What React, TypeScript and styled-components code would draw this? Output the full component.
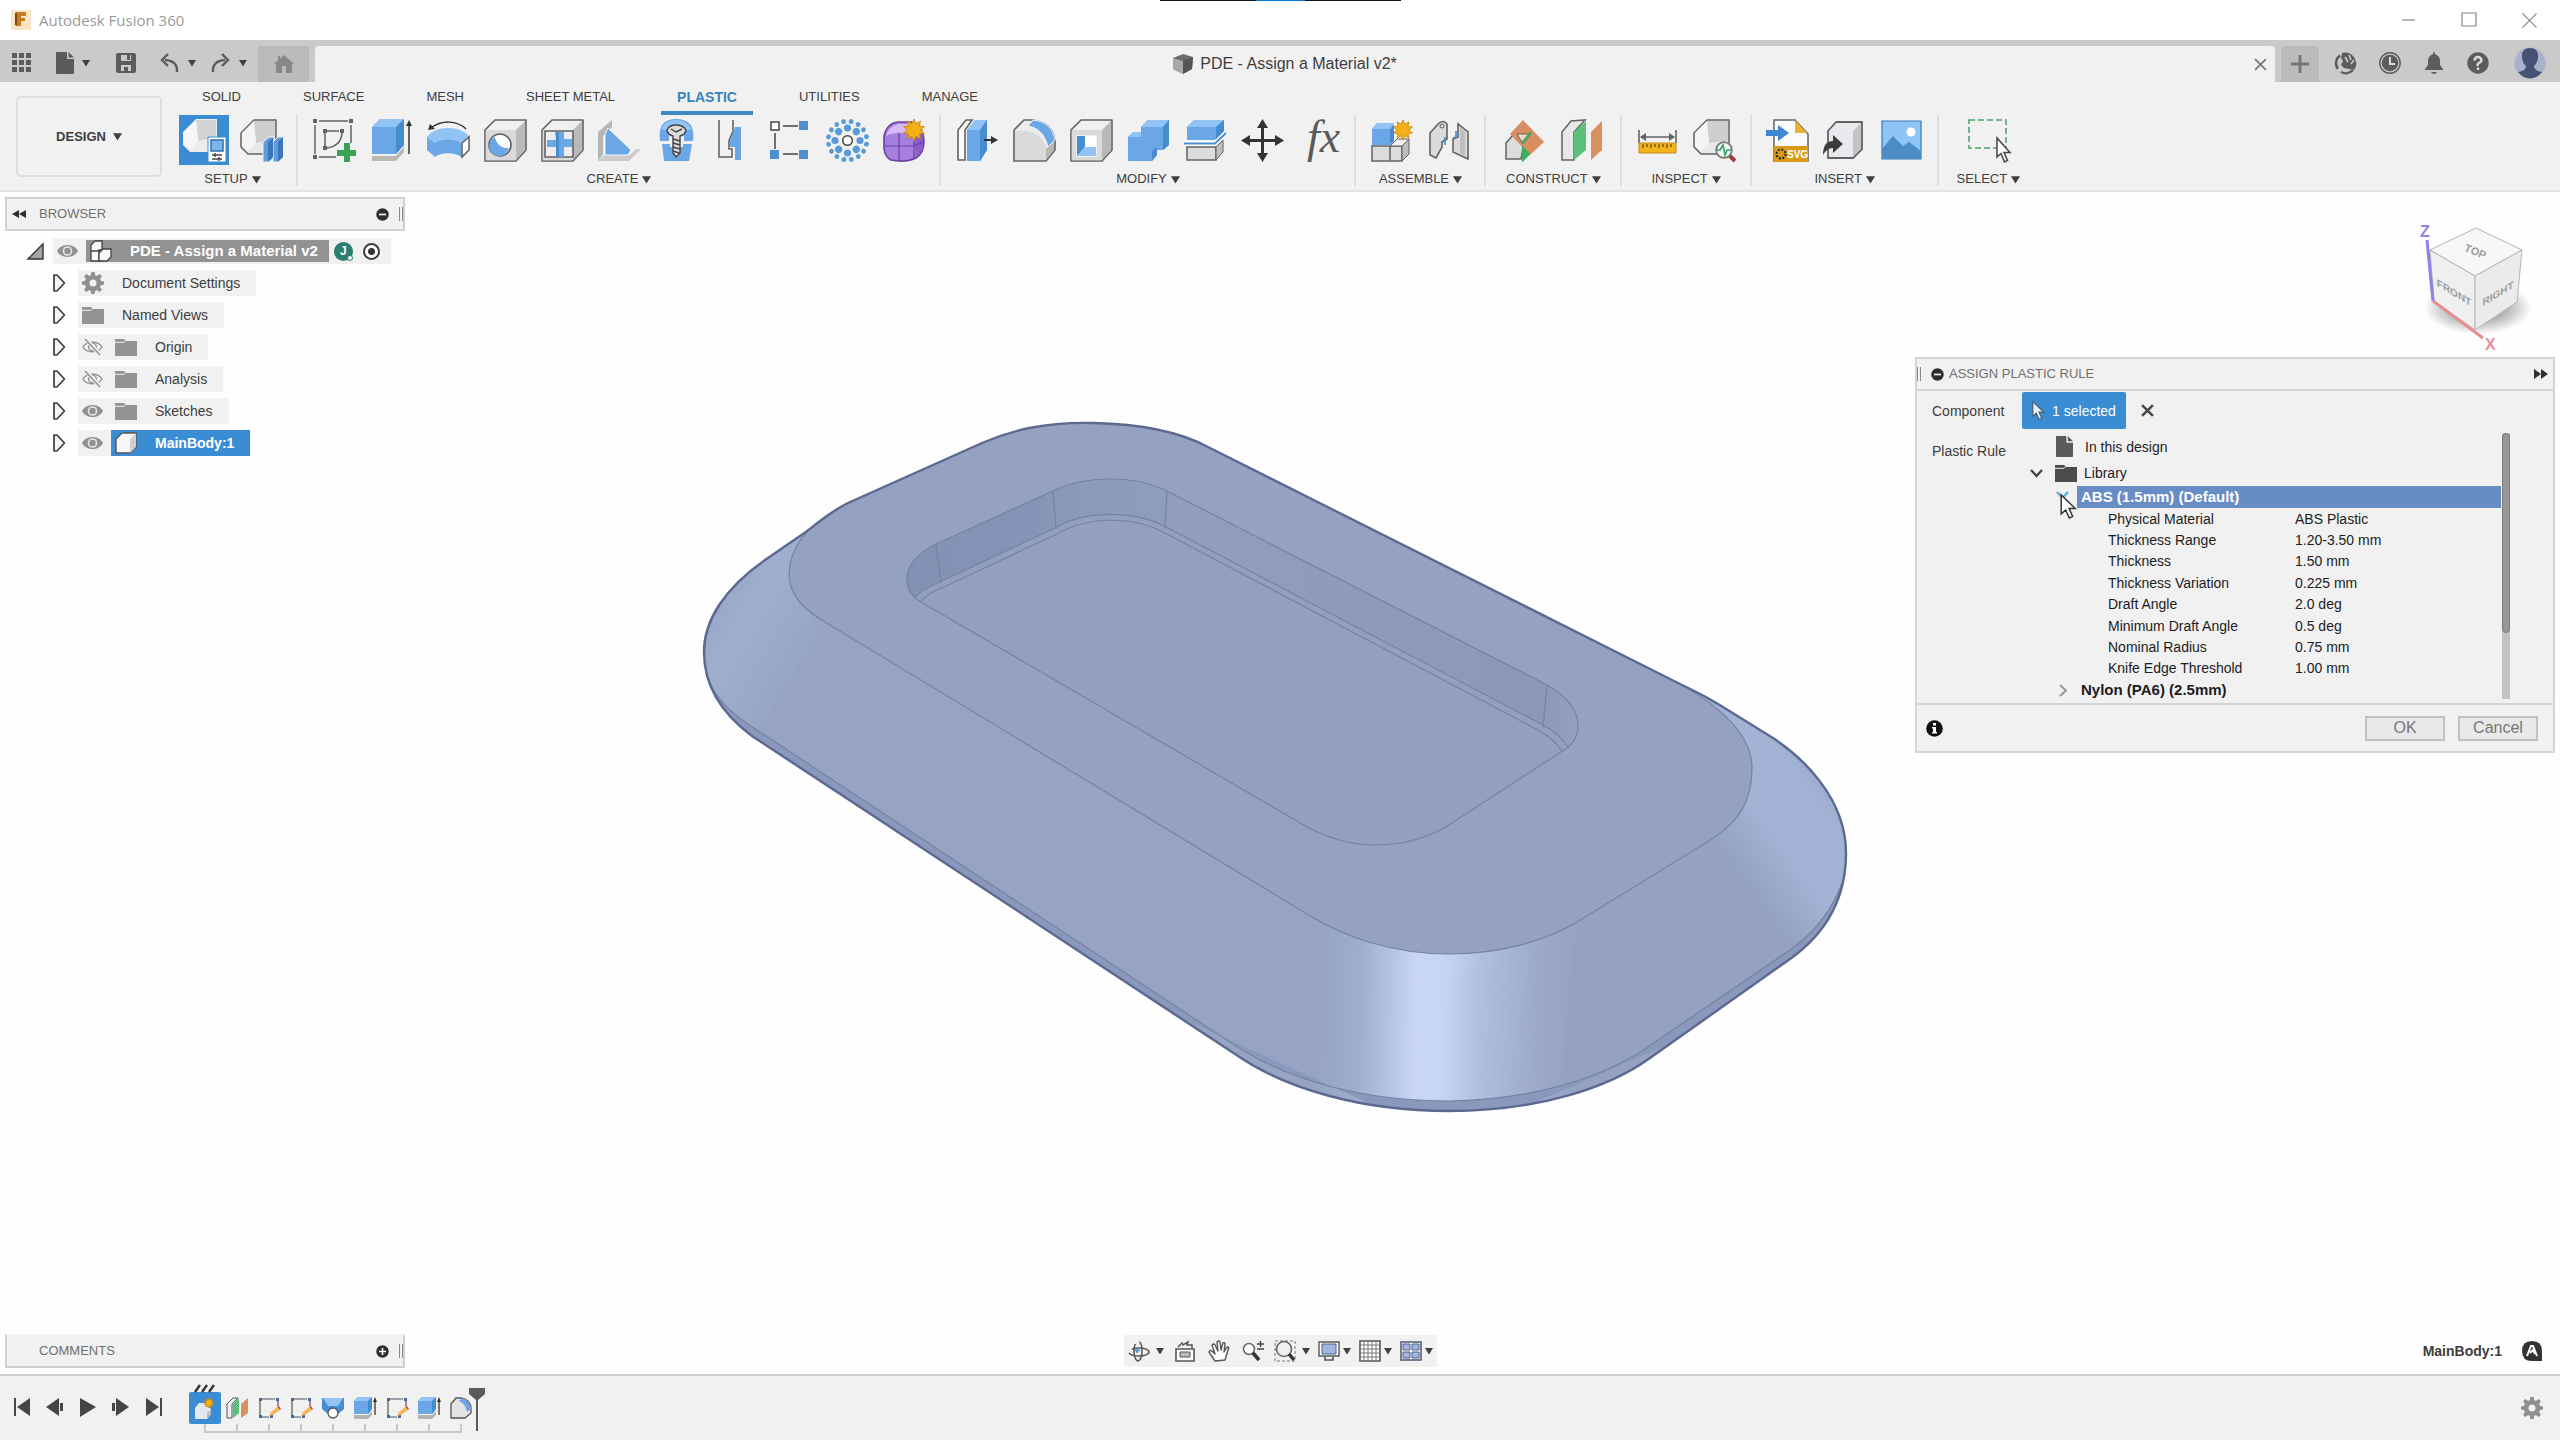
import React from "react";
import styled, { createGlobalStyle, css } from "styled-components";

const color = {
  ink: "#3d3d3d",
  icon: "#5c5c5c",
  muted: "#6f6f6f",
  panel: "#f1f1f1",
  bar: "#cacaca",
  line: "#cfcfcf",
  accent: "#3a8dd3",
  row: "#688dc4",
};

const GlobalStyle = createGlobalStyle`
  *, *::before, *::after { box-sizing: border-box; }
  body { margin: 0; background: #fff; }
  button, input { font: inherit; color: inherit; }
  svg { display: block; flex: none; }
  h1, h2, ul, dl { margin: 0; padding: 0; font: inherit; list-style: none; }
`;

/* ---------- layout ---------- */

const Shell = styled.div`
  min-height: 100vh;
  display: flex;
  flex-direction: column;
  color: ${color.ink};
  font-family: "Liberation Sans", Arial, sans-serif;
  font-size: 14px;
  line-height: 18px;
  background: #fefefe;
`;

const Ghost = styled.button`
  display: inline-flex;
  align-items: center;
  justify-content: center;
  padding: 0;
  border: 0;
  background: none;
  cursor: default;
  white-space: nowrap;
`;

const TitleBar = styled.header`
  display: grid;
  grid-template-columns: 1fr auto 1fr;
  align-items: center;
  height: 40px;
  padding: 0 11px;
  background: #fff;
`;
const AppName = styled.h1`
  display: flex;
  align-items: center;
  gap: 8px;
  font-family: "Open Sans", "Noto Sans", sans-serif;
  font-size: 15px;
  line-height: 20px;
  color: #9a9a9a;
`;
const Strip = styled.div`
  align-self: start;
  width: 241px;
  height: 1px;
  background: linear-gradient(90deg, #111 40%, #0a78d6 40% 60%, #111 60%);
`;
const WindowButtons = styled.div`
  justify-self: end;
  display: flex;
  gap: 43px;
  margin-right: 11px;
  color: #858585;
`;

const TabBar = styled.div`
  display: flex;
  align-items: flex-end;
  height: 42px;
  background: ${color.bar};
`;
const QuickAccess = styled.div`
  display: flex;
  align-items: center;
  height: 38px;
  width: 258px;
  padding-left: 12px;
  color: ${color.icon};
`;
const QuickButton = styled(Ghost)<{ $w: number; $gap: number }>`
  justify-content: space-between;
  width: ${(p) => p.$w}px;
  margin-right: ${(p) => p.$gap}px;
`;
const HomeTab = styled(Ghost)`
  width: 51px;
  height: 36px;
  margin-right: 6px;
  background: #bbb;
  color: #888;
`;
const DocTab = styled.div`
  flex: 1;
  display: flex;
  align-items: center;
  height: 36px;
  padding-right: 8px;
  background: ${color.panel};
  border-radius: 4px 4px 0 0;
`;
const DocTitle = styled.div`
  flex: 1;
  display: flex;
  align-items: center;
  justify-content: center;
  gap: 6px;
  font-size: 16px;
`;
const NewTab = styled(Ghost)`
  width: 38px;
  height: 36px;
  margin-left: 6px;
  border-radius: 4px 4px 0 0;
  background: #bbb;
  color: #777;
`;
const Utilities = styled.div`
  display: flex;
  align-items: center;
  height: 38px;
  gap: 22px;
  padding: 0 14px 0 16px;
  color: ${color.icon};
`;
const Account = styled(Ghost)`
  margin-left: 3px;
`;

const Ribbon = styled.div`
  display: flex;
  height: 110px;
  padding-left: 16px;
  background: ${color.panel};
  border-bottom: 2px solid #e3e3e3;
`;
const WorkspaceButton = styled(Ghost)`
  gap: 7px;
  width: 146px;
  height: 81px;
  margin: 14px 6px 0 0;
  border: 2px solid #dedede;
  border-radius: 5px;
  font-size: 13px;
  font-weight: bold;
`;
const RibbonBody = styled.div`
  flex: 1;
`;
const TabList = styled.div`
  display: flex;
  gap: 30px;
  height: 33px;
  padding-left: 18px;
`;
const Tab = styled(Ghost)<{ $on?: boolean }>`
  padding: 0 16px;
  font-size: 13px;
  border-bottom: 4px solid transparent;
  ${(p) =>
    p.$on &&
    css`
      font-size: 14px;
      font-weight: bold;
      color: #3584bb;
      border-color: #3f88bf;
    `}
`;
const Groups = styled.div`
  display: flex;
`;
const Group = styled.section`
  display: flex;
  flex-direction: column;
  align-items: center;
  padding: 0 10px 0 11px;
  border-right: 2px solid #dedede;
  height: 71px;
  &:last-child {
    border-right: 0;
    padding: 0 9px;
  }
`;
const Tools = styled.div`
  display: flex;
  gap: 7px;
`;
const Tool = styled(Ghost)<{ $on?: boolean }>`
  width: 50px;
  height: 50px;
  background: ${(p) => (p.$on ? color.accent : "none")};
`;
const GroupLabel = styled(Ghost)`
  gap: 4px;
  margin-top: 5px;
  padding: 0 9px;
  font-size: 13px;
  line-height: 18px;
`;

const Stage = styled.main`
  flex: 1;
  display: grid;
  grid-template: 1fr auto / auto 1fr auto;
  padding: 5px 5px 6px;
  background: #fefefe;
`;
const ModelLayer = styled.div`
  grid-area: 1 / 1 / -1 / -1;
  display: flex;
  align-items: center;
  justify-content: center;
`;
const LeftDock = styled.section`
  grid-area: 1 / 1;
  width: 400px;
`;
const RightDock = styled.section`
  grid-area: 1 / 3;
  display: flex;
  flex-direction: column;
  align-items: flex-end;
  width: 640px;
  padding-top: 18px;
`;
const CubeHolder = styled.div`
  padding-right: 5px;
`;
const PanelBar = styled.div`
  display: flex;
  align-items: center;
  height: 34px;
  padding: 0 0 0 5px;
  background: ${color.panel};
  border: 2px solid ${color.line};
  color: ${color.muted};
  font-size: 13px;
`;
const PanelTitle = styled.h2`
  flex: 1;
  padding-left: 13px;
`;
const ArrowSlot = styled.span`
  width: 14px;
`;
const Grip = styled.span`
  width: 4px;
  height: 14px;
  margin-left: 10px;
  border: solid #888;
  border-width: 0 1px;
`;

/* ---------- browser tree ---------- */

const Tree = styled.ul`
  padding-top: 7px;
`;
const TreeRow = styled.li<{ $root?: boolean }>`
  display: flex;
  align-items: center;
  height: 26px;
  margin-bottom: 6px;
  padding-left: ${(p) => (p.$root ? 22 : 48)}px;
`;
const Expander = styled(Ghost)<{ $root?: boolean }>`
  width: ${(p) => (p.$root ? 26 : 25)}px;
  justify-content: flex-start;
`;
const TreeCell = styled.div`
  display: flex;
  align-items: center;
  height: 26px;
  background: ${color.panel};
`;
const EyeButton = styled(Ghost)`
  width: 33px;
  padding-left: 4px;
  justify-content: flex-start;
`;
const TreeLabel = styled.span<{ $kind?: "root" | "sel" }>`
  display: flex;
  align-items: center;
  gap: 18px;
  height: 26px;
  padding: 0 16px 0 4px;
  ${(p) =>
    p.$kind === "sel" &&
    css`
      background: ${color.accent};
      color: #fff;
      font-weight: bold;
    `}
  ${(p) =>
    p.$kind === "root" &&
    css`
      height: 22px;
      padding-right: 11px;
      background: #929292;
      color: #fff;
      font-size: 15px;
      font-weight: bold;
    `}
`;
const Badge = styled.span`
  position: relative;
  display: grid;
  place-items: center;
  width: 19px;
  height: 19px;
  margin: 0 10px 0 5px;
  border-radius: 50%;
  background: #2d7d70;
  color: #fff;
  font-size: 12px;
  font-weight: bold;
  &::after {
    content: "";
    position: absolute;
    right: 0;
    bottom: 0;
    width: 6px;
    height: 6px;
    border: 1px solid #2d7d70;
    border-radius: 50%;
    background: #fff;
  }
`;
const ActiveRadio = styled.input`
  appearance: none;
  width: 17px;
  height: 17px;
  margin: 0 11px 0 0;
  border: 2px solid #3d3d3d;
  border-radius: 50%;
  background: radial-gradient(circle, #333 0 3px, #fff 4px);
`;

/* ---------- dialog ---------- */

const Dialog = styled.form`
  width: 640px;
  background: ${color.panel};
  border: 2px solid #d4d4d4;
`;
const DialogHead = styled.div`
  display: flex;
  align-items: center;
  height: 32px;
  padding: 0 5px 0 0;
  border-bottom: 2px solid #d4d4d4;
  color: ${color.muted};
  font-size: 13px;
  h2 {
    flex: 1;
    padding-left: 5px;
  }
`;
const HeadGrip = styled(Grip)`
  margin: 0 10px 0 0;
`;
const Fields = styled.div`
  display: grid;
  grid-template-columns: 90px 1fr;
  padding: 1px 43px 2px 15px;
`;
const FieldLabel = styled.span<{ $top?: number }>`
  padding-top: ${(p) => p.$top}px;
`;
const Picker = styled.div`
  display: flex;
  align-items: center;
  gap: 15px;
  height: 37px;
`;
const Selected = styled(Ghost)`
  gap: 7px;
  width: 104px;
  height: 37px;
  border-radius: 2px;
  background: ${color.accent};
  color: #fff;
`;
const RuleBox = styled.div`
  display: flex;
  height: 272px;
  padding-top: 4px;
`;
const RuleList = styled.div`
  flex: 1;
  color: #1c1c1c;
`;
const RuleRow = styled.div<{ $indent: number; $h: number }>`
  display: flex;
  align-items: center;
  height: ${(p) => p.$h}px;
  padding-left: ${(p) => p.$indent}px;
`;
const Twist = styled(Ghost)<{ $w: number }>`
  position: relative;
  justify-content: flex-start;
  width: ${(p) => p.$w}px;
`;
const Pointer = styled.span`
  position: absolute;
  left: 4px;
  top: 7px;
`;
const IconCell = styled.span`
  width: 29px;
`;
const RuleName = styled.span<{ $on?: boolean }>`
  flex: 1;
  height: 100%;
  display: flex;
  align-items: center;
  padding-left: 4px;
  margin-right: 1px;
  font-size: 15px;
  font-weight: bold;
  ${(p) =>
    p.$on &&
    css`
      background: ${color.row};
      color: #fff;
    `}
`;
const RuleTable = styled.table`
  width: 394px;
  height: 171px;
  margin-left: 86px;
  border-collapse: collapse;
  th,
  td {
    padding: 0;
    line-height: 16px;
    font-weight: normal;
    text-align: left;
  }
  th {
    width: 187px;
  }
`;
const Track = styled.div`
  width: 8px;
  height: 266px;
  background: #c2c2c2;
`;
const Thumb = styled.div`
  height: 200px;
  border: 1px solid #7c7c7c;
  border-radius: 4px;
  background: #979797;
`;
const DialogFoot = styled.div`
  display: flex;
  align-items: center;
  gap: 13px;
  height: 48px;
  padding: 0 15px 0 9px;
  border-top: 2px solid #d4d4d4;
`;
const Spring = styled.span`
  flex: 1;
`;
const FootButton = styled.button`
  width: 80px;
  height: 25px;
  padding: 0;
  border: 2px solid #c2c2c2;
  background: #e9e9e9;
  color: #777;
  font-size: 16px;
  line-height: 20px;
`;

/* ---------- bottom ---------- */

const StageFoot = styled.div`
  grid-area: 2 / 1 / 3 / -1;
  display: grid;
  grid-template-columns: 1fr auto 1fr;
  align-items: center;
`;
const Comments = styled(PanelBar)`
  width: 400px;
  border-top-color: ${color.panel};
`;
const NavBar = styled.div`
  display: flex;
  align-items: center;
  gap: 8px;
  height: 32px;
  padding: 0 4px;
  background: ${color.panel};
`;
const NavButton = styled(Ghost)<{ $gap?: number }>`
  gap: ${(p) => p.$gap ?? 0}px;
  padding: 0 ${(p) => (p.$gap ? 0 : 2)}px;
`;
const Status = styled.div`
  justify-self: end;
  display: flex;
  align-items: center;
  gap: 20px;
  padding-right: 13px;
  font-weight: bold;
`;
const Timeline = styled.footer`
  display: flex;
  align-items: center;
  height: 66px;
  padding: 0 17px 0 13px;
  background: ${color.panel};
  border-top: 2px solid #cdcdcd;
`;
const Playback = styled.div`
  display: flex;
  gap: 15px;
  color: #454545;
`;
const History = styled.ol`
  display: flex;
  margin: 0 0 0 26px;
  padding: 9px 0 0;
  list-style: none;
`;
const Step = styled.li`
  width: 32px;
  display: flex;
  flex-direction: column;
  align-items: center;
  &::after {
    content: "";
    width: 32px;
    height: 9px;
    border-bottom: 2px solid #c8c8c8;
    background: linear-gradient(#c8c8c8, #c8c8c8) 50% 0 / 2px 9px no-repeat;
  }
  &:first-child::after {
    align-self: flex-end;
    width: 17px;
    background-position: 0 0;
  }
  &:last-child::after {
    align-self: flex-start;
    width: 17px;
    background-position: 100% 0;
  }
`;
const StepButton = styled(Ghost)<{ $on?: boolean }>`
  position: relative;
  width: 32px;
  height: 32px;
  border-radius: 2px;
  background: ${(p) => (p.$on ? color.accent : "none")};
`;
const Hatch = styled.span`
  position: absolute;
  left: 5px;
  top: -7px;
`;
const Marker = styled.span`
  margin-left: -8px;
  padding-top: 3px;
`;

/* ---------- small icons ---------- */

const Caret = ({ s = 8 }: { s?: number }) => (
  <svg width={s} height={s} viewBox="0 0 8 8" aria-hidden="true">
    <path d="M0 1H8L4 7.5Z" fill="#3f3f3f" />
  </svg>
);

const Svg = ({ w = 20, h = 20, vb, children }: { w?: number; h?: number; vb?: string; children: React.ReactNode }) => (
  <svg width={w} height={h} viewBox={vb ?? `0 0 ${w} ${h}`} fill="none" aria-hidden="true" overflow="visible">
    {children}
  </svg>
);

const Gear = ({ s = 22 }: { s?: number }) => (
  <Svg w={s} h={s} vb="0 0 22 22">
    <circle cx="11" cy="11" r="5.8" stroke="#8f8f8f" strokeWidth="4.6" />
    {[0, 45, 90, 135, 180, 225, 270, 315].map((a) => (
      <path key={a} d="M8.600 4.600 9.400 0H12.600L13.400 4.600Z" fill="#8f8f8f" transform={`rotate(${a} 11 11)`} />
    ))}
  </Svg>
);

const Eye = ({ off }: { off?: boolean }) =>
  off ? (
    <Svg w={21} h={18}>
      <path d="M1 9C5 2.500 16 2.500 20 9C16 15.500 5 15.500 1 9Z" stroke="#8c8c8c" strokeWidth="1.300" />
      <circle cx="10.500" cy="9" r="3.800" stroke="#8c8c8c" strokeWidth="1.300" />
      <path d="M4 1 18 17" stroke="#f1f1f1" strokeWidth="4" />
      <path d="M3 1 18 17" stroke="#8c8c8c" strokeWidth="1.300" />
    </Svg>
  ) : (
    <Svg w={21} h={18}>
      <path d="M0 9C4 1 17 1 21 9C17 17 4 17 0 9Z" fill="#929292" />
      <circle cx="10.500" cy="9" r="4" stroke="#e6e6e6" strokeWidth="1.600" />
    </Svg>
  );

const Folder = ({ c = "#929292", w = 22 }: { c?: string; w?: number }) => (
  <Svg w={w} h={18} vb="0 0 22 18">
    <path d="M0 1H9L11 3H22V18H0Z" fill={c} />
    <path d="M0 4.300H9L11 2.300" stroke="#f1f1f1" strokeWidth="1" />
  </Svg>
);

const FileIcon = ({ w = 18, h = 22 }: { w?: number; h?: number }) => (
  <Svg w={w} h={h} vb="0 0 18 22">
    <path d="M0 1Q0 0 1 0H11V7H18V21Q18 22 17 22H1Q0 22 0 21Z" fill="#5a5a5a" />
    <path d="M12.500 0 18 5.500H12.500Z" fill="#5a5a5a" />
  </Svg>
);

const Dot = ({ plus }: { plus?: boolean }) => (
  <Svg w={13} h={13}>
    <circle cx="6.500" cy="6.500" r="6.200" fill="#2e2e2e" />
    <path d={plus ? "M3 6.500H10M6.500 3V10" : "M3 6.500H10"} stroke="#fff" strokeWidth="1.600" />
  </Svg>
);

const Doubles = ({ left }: { left?: boolean }) => (
  <Svg w={14} h={10}>
    <path d={left ? "M7 1V9L0 5ZM14 1V9L7 5Z" : "M0 0V10L7 5ZM7 0V10L14 5Z"} fill="#2e2e2e" />
  </Svg>
);

const Cross = ({ s = 12, w = 2, c = "currentColor" }: { s?: number; w?: number; c?: string }) => (
  <Svg w={s} h={s} vb="0 0 12 12">
    <path d="M1 1 11 11M11 1 1 11" stroke={c} strokeWidth={w} />
  </Svg>
);

const Arrow = ({ w = 16, h = 24, fill = "#fff", stroke = "#333" }) => (
  <Svg w={w} h={h} vb="0 0 16 24">
    <path d="M1 1V19L5.300 15.200 8.800 23 12 21.500 8.600 14H14.500Z" fill={fill} stroke={stroke} strokeWidth="1.400" />
  </Svg>
);

const TreeArrow = () => (
  <Svg w={13} h={18}>
    <path d="M1 1H4L11.500 9 4 17H1Z" fill="#f4f4f4" stroke="#3c3c3c" strokeWidth="1.700" strokeLinejoin="round" />
  </Svg>
);

/* ---------- ribbon icons, 43 x 43 ---------- */

const K = "#636363";
const B = { top: "#91c3f5", front: "#6ba7e6", side: "#478bd0" };

const RI = ({ children }: { children: React.ReactNode }) => (
  <Svg w={43} h={43}>{children}</Svg>
);

const GreyBox = () => (
  <>
    <path d="M1 11 11 1H42V31L32 42H1Z" fill="#f0f0f0" stroke={K} strokeWidth="1.600" strokeLinejoin="round" />
    <path d="M1.800 11H32V41.200H1.800Z" fill="#dadada" />
    <path d="M32 11 41 2V31L32 41Z" fill="#b9b9b9" />
  </>
);

const Part = () => (
  <>
    <path d="M1 14 14 1H36V30L28 35H8L1 28Z" fill="#e4e4e4" stroke={K} strokeWidth="1.500" strokeLinejoin="round" />
    <path d="M14 2H35V22L16 24Z" fill="#cfcfcf" />
    <path d="M2 14 14 2 16 24 8 33 2 27Z" fill="#f4f4f4" />
    <path d="M16 24 35 22V30L28 34H9Z" fill="#e9e9e9" />
  </>
);

const Burst = ({ x, y, r = 10 }: { x: number; y: number; r?: number }) => {
  const pts = Array.from({ length: 20 }, (_, i) => {
    const q = i % 2 ? r * 0.6 : r;
    const a = (i * Math.PI) / 10;
    return `${(x + q * Math.sin(a)).toFixed(1)},${(y - q * Math.cos(a)).toFixed(1)}`;
  }).join(" ");
  return <polygon points={pts} fill="#f3b117" stroke="#c98500" strokeWidth="0.800" />;
};

const icons: Record<string, React.ReactNode> = {
  assignRule: (
    <RI>
      <path d="M0 13 13 0H34V24L26 33H7L0 26Z" fill="#ececec" />
      <path d="M13 1H33V18L15 22Z" fill="#d4d4d4" />
      <path d="M1 13 13 1 15 22 7 31 1 25Z" fill="#f7f7f7" />
      <path d="M25 18H43V43H25Z" fill="#fff" stroke={color.accent} strokeWidth="1" />
      <path d="M28 21H40V32H28Z" fill="#7db4ea" stroke="#2f6fae" strokeWidth="1.500" />
      <path d="M29 36H39M29 40H39M32 34V38M36 38V42" stroke="#444" strokeWidth="1.400" />
    </RI>
  ),
  manageRules: (
    <RI>
      <Part />
      <path d="M23 23 29 18H34L33 40 28 43H23Z" fill="#5c9ce0" stroke="#f1f1f1" strokeWidth="1" />
      <path d="M33 23 38 18H43V38L38 43H33Z" fill="#5c9ce0" stroke="#f1f1f1" strokeWidth="1" />
      <path d="M38 23 43 18V38L38 43Z" fill="#3a76b8" />
      <path d="M28 23 33 19V38L28 43Z" fill="#3a76b8" />
    </RI>
  ),
  sketch: (
    <RI>
      <path d="M6 2H35M2 6V35M6 38H23M38 6V24M14 12H26M12 14V27" stroke={K} strokeWidth="1.500" />
      <path d="M29 14Q28 27 14 29" stroke={K} strokeWidth="1.600" />
      <path d="M0 0H4V4H0ZM36 0H40V4H36ZM0 36H4V40H0ZM10 10H14V14H10ZM27 10H31V14H27ZM10 27H14V31H10Z" fill={K} />
      <path d="M31 24H37V31H43V37H37V43H31V37H24V31H31Z" fill="#3ba159" />
    </RI>
  ),
  extrude: (
    <RI>
      <path d="M2 37H26L34 28V33L26 42H2Z" fill="#b9b9b2" />
      <path d="M2 8 10 0H34V26L26 35H2Z" fill={B.front} />
      <path d="M2 8 10 0H34L26 8Z" fill={B.top} />
      <path d="M26 8 34 0V26L26 35Z" fill={B.side} />
      <path d="M39 35V4" stroke="#333" strokeWidth="1.500" />
      <path d="M36 7 39 1 42 7Z" fill="#333" />
    </RI>
  ),
  revolve: (
    <RI>
      <path d="M0 18C8 6 34 6 43 18L35 24C30 19 13 19 8 24Z" fill={B.top} />
      <path d="M0 18 8 24V38L0 31ZM8 24C13 19 30 19 34 24V38C28 33 14 33 8 38Z" fill={B.front} />
      <path d="M35 24 42 18V31L35 38Z" fill="#fff" stroke={K} strokeWidth="1.600" />
      <path d="M4 9C14 1 30 1 39 10" stroke="#333" strokeWidth="1.500" />
      <path d="M1 11 3 5 8 10Z" fill="#333" />
    </RI>
  ),
  hole: (
    <RI>
      <GreyBox />
      <circle cx="16" cy="26" r="11" fill="#fff" stroke={K} strokeWidth="1.600" />
      <path d="M11 18A10 10 0 1 0 25 29C18 30 12 25 11 18Z" fill={B.front} />
    </RI>
  ),
  rest: (
    <RI>
      <GreyBox />
      <path d="M4 12H32V38H4Z" fill="#eee" stroke={K} strokeWidth="1.600" />
      <path d="M14 13H23V20H31V28H23V38H15V28H6V21H15Z" fill={B.front} />
      <path d="M15 13H18V38H15Z" fill={B.side} />
    </RI>
  ),
  web: (
    <RI>
      <path d="M0 13 14 1V8L5 17V35L0 42Z" fill="#b5b5b5" />
      <path d="M0 42 6 36H32L38 30H43L31 42Z" fill="#cbcbcb" />
      <path d="M7 15 10 9 33 31 30 36H7Z" fill={B.front} stroke="#f8f8f8" strokeWidth="1" />
    </RI>
  ),
  boss: (
    <RI>
      <path d="M5 22Q2 0 21 0Q41 0 38 22H29V15H14V22Z" fill={B.front} />
      <path d="M6 10Q10 1 21 1T37 10L30 12Q21 6 13 12Z" fill={B.top} />
      <path d="M7 25H15V28H28V25H37L34 42H9Z" fill={B.front} />
      <path d="M12 11Q14 6 21 6T31 11Q30 16 25 17V34L21 38 18 34V17Q13 16 12 11Z" fill="#dcdcdc" stroke="#444" strokeWidth="1.400" />
      <path d="M16 10 21 13 27 10M18 20 25 22M18 24 25 26M18 28 25 30M18 32 24 34" stroke="#444" strokeWidth="1.400" />
    </RI>
  ),
  snap: (
    <RI>
      <path d="M7 1V38H20V30H17V22L21 12V1" stroke={K} strokeWidth="1.600" />
      <path d="M23 8H29V41H23V28H18V22Z" fill={B.front} />
    </RI>
  ),
  pattern: (
    <RI>
      <path d="M14 7H29M6 14V30M14 35H29" stroke="#444" strokeWidth="1.500" />
      <path d="M2 3H10V11H2Z" fill="#fff" stroke="#444" strokeWidth="1.500" />
      <path d="M30 2H39V11H30ZM1 31H10V40H1ZM30 31H39V40H30Z" fill="#4e8fd2" />
    </RI>
  ),
  circular: (
    <RI>
      {Array.from({ length: 8 }, (_, i) => (
        <circle key={i} cx={21.5} cy={9} r={3.6} fill="#5a9ad6" transform={`rotate(${i * 45} 21.5 21.5)`} />
      ))}
      {Array.from({ length: 16 }, (_, i) => (
        <circle key={i} cx={21.5} cy={2.2} r={2.4} fill="#5a9ad6" transform={`rotate(${i * 22.5 + 11} 21.5 21.5)`} />
      ))}
      <circle cx="21.500" cy="21.500" r="4.800" fill="#fff" stroke="#444" strokeWidth="1.500" />
    </RI>
  ),
  form: (
    <RI>
      <path d="M1 17Q4 4 15 3H28Q40 6 41 22Q41 34 33 39Q22 44 8 41Q2 38 1 30Z" fill="#a77fdf" stroke="#6a41a5" strokeWidth="1.600" />
      <path d="M3 17Q6 7 15 5H28L25 14Q10 13 3 17Z" fill="#d5baf5" />
      <path d="M31 18 40 14V30L33 38Z" fill="#8a5cc8" />
      <path d="M2 27H31L40 23M16 14V41M31 16V40" stroke="#6a41a5" strokeWidth="1.200" />
      <Burst x={31} y={11} r={11} />
    </RI>
  ),
  press: (
    <RI>
      <path d="M2 11 10 1H16L9 11V41H2Z" fill="#fafafa" stroke={K} strokeWidth="1.600" />
      <path d="M11 11 19 1H31V31L24 42H11Z" fill={B.front} />
      <path d="M11 11 19 1H31L24 11Z" fill={B.top} />
      <path d="M24 11 31 1V31L24 42Z" fill={B.side} />
      <path d="M28 21H36" stroke="#333" strokeWidth="2" />
      <path d="M35 17 42 21 35 25Z" fill="#333" />
    </RI>
  ),
  fillet: (
    <RI>
      <path d="M1 11 11 1H19C32 2 41 10 42 22V31L33 42H1Z" fill="#ececec" stroke={K} strokeWidth="1.600" />
      <path d="M2 12H10C24 12 31 20 33 28V41H2Z" fill="#dadada" />
      <path d="M15 7 20 1C34 2 41 12 42 21L35 28C32 16 26 9 15 7Z" fill={B.front} stroke="#f4f4f4" strokeWidth="1" />
      <path d="M33 30 41 23V31L33 41Z" fill="#b5b5b5" />
    </RI>
  ),
  shell: (
    <RI>
      <GreyBox />
      <path d="M6 16H27V38H6Z" fill="#fff" stroke="#ddd" />
      <path d="M7 17H15V28L7 37Z" fill={B.side} />
      <path d="M15 28H26V37H7Z" fill={B.top} />
    </RI>
  ),
  combine: (
    <RI>
      <path d="M1 18 6 13H14V8L21 1H42V26L36 31H30V36L25 42H1Z" fill={B.front} />
      <path d="M14 8 21 1H42L36 8ZM1 18 6 13H14V18Z" fill={B.top} />
      <path d="M36 8 42 1V26L36 31ZM25 32 30 28V36L25 42Z" fill={B.side} />
    </RI>
  ),
  split: (
    <RI>
      <path d="M3 8 10 1H40V12L32 21H3Z" fill={B.front} />
      <path d="M3 8 10 1H40L32 8Z" fill={B.top} />
      <path d="M32 8 40 1V12L32 21Z" fill={B.side} />
      <path d="M3 28H32V41H3Z" fill="#dcdcdc" stroke={K} strokeWidth="1.500" />
      <path d="M32 28 39 21V33L32 41Z" fill="#c0c0c0" stroke={K} />
      <path d="M0 24.500H31L42 14" stroke="#fff" strokeWidth="5" />
      <path d="M0 24.500H31L42 14" stroke="#4a8ed4" strokeWidth="2" />
    </RI>
  ),
  move: (
    <RI>
      <path d="M21.500 6V37M6 21.500H37" stroke="#333" strokeWidth="3" />
      <path d="M21.500 0 27 9H16ZM21.500 43 27 34H16ZM0 21.500 9 16V27ZM43 21.500 34 16V27Z" fill="#333" />
    </RI>
  ),
  component: (
    <RI>
      <path d="M1 27H19V42H1ZM19 27H31V42H19Z" fill="#dcdcdc" stroke={K} strokeWidth="1.500" />
      <path d="M19 27 26 20H38L31 27Z" fill="#f0f0f0" stroke={K} />
      <path d="M31 27 38 20V35L31 42Z" fill="#bcbcbc" stroke={K} />
      <path d="M1 10 6 4H23L19 10V26H1Z" fill={B.front} />
      <path d="M1 10 6 4H23L19 10Z" fill={B.top} />
      <path d="M19 10 23 5V22L19 26Z" fill={B.side} />
      <Burst x={32} y={11} />
    </RI>
  ),
  joint: (
    <RI>
      <path d="M2 14 10 5Q15 0 19 5V20L14 23V28L8 39 2 36Z" fill="#dadada" stroke={K} strokeWidth="1.600" />
      <circle cx="14" cy="7" r="2" stroke={K} />
      <path d="M25 20 30 18V5L40 13V40L25 33Z" fill="#dadada" stroke={K} strokeWidth="1.600" />
      <path d="M32 8 37 13V37L32 34Z" fill="#bdbdbd" />
      <path d="M17 18V26M28 12V18L25 19" stroke="#3a8bd8" strokeWidth="1.600" />
    </RI>
  ),
  midplane: (
    <RI>
      <path d="M3 24 11 15H24L21 24 18 40H3Z" fill="#dcdcdc" stroke={K} strokeWidth="1.500" />
      <path d="M20 1 41 23 27 36 7 15Z" fill="#d98e61" />
      <path d="M14 15H28L20 25Z" fill="#ecd9c8" stroke={K} />
      <path d="M28 13 19 24M20 41V29L26 35Z" stroke="#38b05f" strokeWidth="2" fill="#38b05f" />
    </RI>
  ),
  offsetPlane: (
    <RI>
      <path d="M2 13 11 2 25 1 14 13V41H2Z" fill="#e8e8e8" stroke={K} strokeWidth="1.500" />
      <path d="M14 13 26 2V31L14 41Z" fill="#5ac07a" />
      <path d="M31 13 42 2V31L31 41Z" fill="#d9905f" />
    </RI>
  ),
  measure: (
    <RI>
      <path d="M3 11V24M40 11V24M5 18H38" stroke={K} strokeWidth="1.600" />
      <path d="M4 18 10 14V22ZM39 18 33 14V22Z" fill={K} />
      <path d="M3 24H40V34H3Z" fill="#f2b51c" stroke="#c48b10" />
      <path d="M7 25V29M11 25V28M15 25V29M19 25V28M23 25V29M27 25V28M31 25V29M35 25V28" stroke="#6b4c00" strokeWidth="1.300" />
    </RI>
  ),
  analyse: (
    <RI>
      <Part />
      <path d="M35 35 42 42" stroke="#a33e36" strokeWidth="4" />
      <circle cx="31" cy="31" r="7.800" fill="#eef8f1" stroke="#777" strokeWidth="1.800" />
      <path d="M24 31H27L30 26 32 36 34 31H38" stroke="#38a169" strokeWidth="1.700" />
    </RI>
  ),
  insertSvg: (
    <RI>
      <path d="M8 1H29L42 15V42H8Z" fill="#fbfbfb" stroke={K} strokeWidth="1.500" />
      <path d="M29 1 41 14H29Z" fill="#e6b432" />
      <path d="M8 27H42V43H8Z" fill="#d99b17" />
      <circle cx="15" cy="35" r="4.500" stroke="#222" strokeWidth="2" strokeDasharray="2 1.500" />
      <text x="21" y="39" fontFamily="Liberation Sans, sans-serif" fontSize="10" fontWeight="bold" fill="#fff">SVG</text>
      <path d="M0 11H12V6L23 14 12 22V17H0Z" fill="#3e86cf" />
    </RI>
  ),
  derive: (
    <RI>
      <path d="M5 12 13 3H39V30L30 39H5Z" fill="#e9e9ee" stroke={K} strokeWidth="1.800" strokeLinejoin="round" />
      <path d="M30 12 38 4V30L30 38Z" fill="#c4c4c8" />
      <path d="M6 12H30V38H6Z" fill="#e8e8ee" />
      <path d="M0 36Q0 22 10 22V16L20 25 10 34V29Q4 29 0 36Z" fill="#3c3c3c" />
    </RI>
  ),
  canvas: (
    <RI>
      <path d="M2 2H41V40H2Z" fill="#8fc4f7" stroke="#3b78b8" strokeWidth="1.200" />
      <circle cx="31" cy="13" r="4.500" fill="#fff" />
      <path d="M2 30 13 17 23 27 29 23 41 32V40H2Z" fill="#4c8cc7" />
    </RI>
  ),
  select: (
    <RI>
      <path d="M2 1H39V29H2Z" stroke="#4ea36f" strokeWidth="1.600" strokeDasharray="6 3" />
      <path d="M30 19V38L34 34.500 37.500 43 40.500 41.500 37 33.500H43Z" fill="#fff" stroke="#444" strokeWidth="1.500" />
    </RI>
  ),
  fx: (
    <RI>
      <text x="9" y="33" fontFamily="Liberation Serif, serif" fontSize="46" fontStyle="italic" fill="#5a5a5a">fx</text>
    </RI>
  ),
};

const groups = [
  { name: "SETUP", tools: ["assignRule", "manageRules"] },
  { name: "CREATE", tools: ["sketch", "extrude", "revolve", "hole", "rest", "web", "boss", "snap", "pattern", "circular", "form"] },
  { name: "MODIFY", tools: ["press", "fillet", "shell", "combine", "split", "move", "fx"] },
  { name: "ASSEMBLE", tools: ["component", "joint"] },
  { name: "CONSTRUCT", tools: ["midplane", "offsetPlane"] },
  { name: "INSPECT", tools: ["measure", "analyse"] },
  { name: "INSERT", tools: ["insertSvg", "derive", "canvas"] },
  { name: "SELECT", tools: ["select"] },
];

/* ---------- drawings ---------- */

const Model = () => {
  const outline =
    "M1093 423C1045 422 1012 430 982 443L848 503C828 513 815 526 800 536L765 560C725 588 704 620 704 652C704 690 725 716 752 736L1238 1056C1285 1088 1360 1111 1449 1111C1540 1111 1610 1087 1650 1058L1790 959C1828 932 1846 895 1846 853C1846 800 1805 757 1765 733L1718 704C1700 693 1690 689 1680 684L1208 447C1180 432 1145 424 1093 423Z";
  const lower = "M706 672C712 697 732 714 757 730L1239 1048C1290 1080 1362 1101 1449 1101C1535 1100 1605 1076 1645 1049L1790 950C1818 930 1834 905 1842 883";
  const topEdge = "M848 503C802 526 789 551 789 575C790 597 805 610 825 622L1307 914C1345 938 1395 954 1449 954C1500 954 1545 941 1577 922L1712 839C1740 821 1752 800 1752 768C1752 735 1720 706 1680 684";
  const pocket =
    "M907 579C907 565 918 553 936 544L1053 491C1085 475 1135 475 1167 491L1547 685C1568 697 1578 710 1578 726C1578 735 1575 742 1567 748L1449 825C1425 840 1400 845 1375 845C1350 845 1328 838 1307 827L921 602C912 596 907 590 907 579Z";
  const floor =
    "M914 598C922 590 930 586 942 581L1055 528C1085 510 1135 510 1166 527L1543 725C1555 732 1563 738 1568 748L1449 825C1425 840 1400 845 1375 845C1350 845 1328 838 1307 827L921 602Z";
  return (
    <svg width="1200" height="766" viewBox="680 400 1200 766" role="img" aria-label="Plastic part model">
      <defs>
        <linearGradient id="corner" gradientUnits="userSpaceOnUse" x1="1318" x2="1580" y1="1000" y2="1006">
          <stop offset="0" stopColor="#96a3c4" />
          <stop offset="0.160" stopColor="#9fadcf" />
          <stop offset="0.300" stopColor="#b9c7e8" />
          <stop offset="0.370" stopColor="#c8d5f6" />
          <stop offset="0.480" stopColor="#c6d4f5" />
          <stop offset="0.620" stopColor="#b0bedf" />
          <stop offset="0.850" stopColor="#9ba8ca" />
          <stop offset="1" stopColor="#94a1c1" />
        </linearGradient>
        <linearGradient id="right" gradientUnits="userSpaceOnUse" x1="1738" y1="875" x2="1850" y2="795">
          <stop offset="0" stopColor="#94a1c1" />
          <stop offset="0.400" stopColor="#a3b3d5" />
          <stop offset="0.750" stopColor="#a2b3d6" />
          <stop offset="1" stopColor="#97a7ca" />
        </linearGradient>
        <linearGradient id="left" gradientUnits="userSpaceOnUse" x1="704" y1="600" x2="815" y2="665">
          <stop offset="0" stopColor="#96a4c5" />
          <stop offset="0.350" stopColor="#a0afd0" />
          <stop offset="0.700" stopColor="#9aa8c9" />
          <stop offset="1" stopColor="#96a3c4" />
        </linearGradient>
        <linearGradient id="wall" x1="0" x2="1" y1="0" y2="0">
          <stop offset="0" stopColor="#8391b4" />
          <stop offset="0.180" stopColor="#8593b6" />
          <stop offset="0.260" stopColor="#8b99bb" />
          <stop offset="0.400" stopColor="#909dbf" />
          <stop offset="0.950" stopColor="#8b98ba" />
          <stop offset="1" stopColor="#93a0c1" />
        </linearGradient>
        <clipPath id="body">
          <path d={outline} />
        </clipPath>
      </defs>
      <path d={outline} fill="#96a3c4" />
      <g clipPath="url(#body)">
        <path d="M700 480H860L825 622 757 732 700 740Z" fill="url(#left)" />
        <path d="M1325 920 1275 1120H1640L1577 915Z" fill="url(#corner)" />
        <path d="M1577 915 1712 838 1800 955 1640 1065 1560 1090Z" fill="#94a1c1" />
        <path d="M1680 684 1860 700V900L1795 955 1712 838Z" fill="url(#right)" />
        <path d={`${lower}L1860 960L1450 1140L700 800Z`} fill="#8a98bd" />
      </g>
      <path d={`${topEdge}L1208 447C1180 432 1145 424 1093 423C1045 422 1012 430 982 443Z`} fill="#94a1c1" />
      <path d={pocket} fill="url(#wall)" />
      <path d={floor} fill="#929fbe" />
      <g fill="none" stroke="#75839f" strokeWidth="1.200">
        <path d={lower} />
        <path d={topEdge} />
        <path d={pocket} />
        <path d="M914 598C922 590 930 586 942 581L1055 528C1085 510 1135 510 1166 527L1543 725C1555 732 1563 738 1568 748" />
        <path d="M921 601C927 595 934 590 946 586L1057 534C1088 516 1133 516 1163 532L1538 730C1550 737 1557 743 1562 751" />
        <path d="M1053 491 1056 529M1167 491 1165 529M936 544 941 583M1547 685 1543 727" />
      </g>
      <path d={outline} fill="none" stroke="#5c6890" strokeWidth="2.400" />
    </svg>
  );
};

const ViewCube = () => (
  <svg width="140" height="142" viewBox="2410 215 140 142" role="img" aria-label="View cube" fontFamily="Liberation Sans, sans-serif">
    <defs>
      <radialGradient id="shade">
        <stop offset="0.500" stopColor="#000" stopOpacity="0.300" />
        <stop offset="1" stopColor="#000" stopOpacity="0" />
      </radialGradient>
    </defs>
    <ellipse cx="2478" cy="308" rx="54" ry="26" fill="url(#shade)" />
    <g stroke="#b4b4b4" strokeLinejoin="round">
      <path d="M2476 228 2522 250 2475 276 2430 250Z" fill="#f7f7f7" />
      <path d="M2430 250 2475 276V330L2434 301Z" fill="#efefef" />
      <path d="M2522 250 2475 276V330L2517 302Z" fill="#ebebeb" />
    </g>
    <path d="M2427 240 2433 301" stroke="#8a80ee" strokeWidth="3" />
    <path d="M2433 301 2483 338" stroke="#e88d94" strokeWidth="3" />
    <text x="2420" y="237" fontSize="16" fontWeight="bold" fill="#8d84e8">Z</text>
    <text x="2485" y="350" fontSize="16" fontWeight="bold" fill="#f08c96">X</text>
    <g fill="#9b9b9b" fontSize="11" fontWeight="bold" textAnchor="middle">
      <text transform="translate(2454 296) skewY(31)" fontSize="10">FRONT</text>
      <text transform="translate(2498 297) skewY(-31)" fontSize="10">RIGHT</text>
      <text transform="translate(2474 255) rotate(22)">TOP</text>
    </g>
  </svg>
);

const Cube = ({ s = 22 }: { s?: number }) => (
  <Svg w={s} h={s} vb="0 0 22 22">
    <path d="M1 7 7 1H21V15L15 21H1Z" fill="#f7f7fa" stroke="#555" strokeWidth="1.400" strokeLinejoin="round" />
    <path d="M15 7 21 1V15L15 21Z" fill="#cfcfd4" />
  </Svg>
);

const tree = [
  { name: "Document Settings", icon: "gear" },
  { name: "Named Views", icon: "folder" },
  { name: "Origin", eye: "off", icon: "folder" },
  { name: "Analysis", eye: "off", icon: "folder" },
  { name: "Sketches", eye: "on", icon: "folder" },
  { name: "MainBody:1", eye: "on", icon: "cube" },
];

const rule = [
  ["Physical Material", "ABS Plastic"],
  ["Thickness Range", "1.20-3.50 mm"],
  ["Thickness", "1.50 mm"],
  ["Thickness Variation", "0.225 mm"],
  ["Draft Angle", "2.0 deg"],
  ["Minimum Draft Angle", "0.5 deg"],
  ["Nominal Radius", "0.75 mm"],
  ["Knife Edge Threshold", "1.00 mm"],
];

const playback: [string, string][] = [
  ["Go to start", "M1 0H3V18H1ZM17 0V18L4 9Z"],
  ["Step back", "M13 0V18L0 9ZM14 5H17V13H14Z"],
  ["Play", "M1 0V19L17 9Z"],
  ["Step forward", "M4 0V18L17 9ZM0 5H3V13H0Z"],
  ["Go to end", "M1 0V18L14 9ZM15 0H17V18H15Z"],
];

const S = ({ children }: { children: React.ReactNode }) => <Svg w={22} h={22}>{children}</Svg>;
const stepSketch = (
  <S>
    <path d="M4 2H17M2 4V18M4 20H11M20 4V9" stroke="#555" strokeWidth="1.200" />
    <path d="M1 1H4V4H1ZM18 1H21V4H18ZM1 18H4V21H1ZM12 18H15V21H12Z" fill="#3f68a8" />
    <path d="M11 19 13 15 19 10 22 13 15 18Z" fill="#f0b65c" />
    <path d="M19 10 21 9 23 12 22 13Z" fill="#cf4a41" />
  </S>
);
const stepExtrude = (
  <S>
    <path d="M0 18H14L18 14V18L14 22H0Z" fill="#b5b5b0" />
    <path d="M0 4 4 0H18V12L14 17H0Z" fill={B.front} />
    <path d="M0 4 4 0H18L14 4Z" fill={B.top} />
    <path d="M14 4 18 0V12L14 17Z" fill={B.side} />
    <path d="M21 18V3" stroke="#333" strokeWidth="1.300" />
    <path d="M19 5 21 0 23 5Z" fill="#333" />
  </S>
);
const steps: [string, React.ReactNode][] = [
  ["Component", <S key="a"><path d="M1 11 5 6H11Q17 9 17 14V17L13 22H1Z" fill="#e3e7ee" /><path d="M13 16 17 13V17L13 22Z" fill="#b8bcc6" /><Burst x={15} y={6} r={5} /></S>],
  ["Offset plane", <S key="b"><path d="M1 7 7 1H12L6 7V21H1Z" fill="#eee" stroke="#555" /><path d="M7 7 13 1V16L7 21Z" fill="#5ac07a" /><path d="M15 7 22 1V16L15 21Z" fill="#d9905f" /></S>],
  ["Sketch", stepSketch],
  ["Sketch", stepSketch],
  ["Loft", <S key="e"><path d="M0 1H22V12L16 17H6L0 12Z" fill={B.side} /><path d="M1 1H21L16 9H6Z" fill={B.top} /><circle cx="11" cy="16" r="5" fill="#fff" stroke="#555" strokeWidth="1.300" /></S>],
  ["Extrude", stepExtrude],
  ["Sketch", stepSketch],
  ["Extrude", stepExtrude],
  ["Fillet", <S key="i"><path d="M1 7 6 1H11Q21 3 21 12V16L15 21H1Z" fill="#e3e3e3" stroke="#555" strokeWidth="1.300" /><path d="M9 4 12 1Q21 4 21 12L17 15Q16 7 9 4Z" fill={B.front} /></S>],
];

const nav: [string, React.ReactNode, number?][] = [
  ["Orbit", <S key="o"><ellipse cx="11" cy="12" rx="10" ry="4" stroke="#555" strokeWidth="1.500" strokeDasharray="22 5" /><ellipse cx="10" cy="11" rx="4" ry="10" stroke="#555" strokeWidth="1.500" strokeDasharray="30 6" /><path d="M9 8V13M7 10.500H12" stroke="#3b8ed4" strokeWidth="1.500" /></S>, 6],
  ["Look at", <S key="l"><path d="M2 9H20V21H2Z" fill="#fff" stroke="#555" strokeWidth="1.600" /><path d="M6 12H16V17H6Z" fill="#bbb" stroke="#555" /><path d="M4 7 8 3 9 5 14 2 13 5H18V8" stroke="#555" strokeWidth="1.500" /></S>],
  ["Pan", <S key="p"><path d="M7 21 1 12Q2 9 5 12L7 14 4 5Q6 3 7 5L10 11 9 2Q11 0 12 2L13 10 15 3Q17 2 17 4L16 12 19 7Q22 7 20 10L17 20Z" fill="#fff" stroke="#555" strokeWidth="1.400" strokeLinejoin="round" /></S>],
  ["Zoom", <S key="z"><circle cx="7" cy="9" r="5.500" fill="#fff" stroke="#666" strokeWidth="1.500" /><path d="M11 13 17 20" stroke="#333" strokeWidth="3.500" /><path d="M15 4H22M18.500 1V7M15 9H22" stroke="#444" strokeWidth="1.400" /></S>],
  ["Zoom window", <S key="w"><path d="M1 1H21V21H1Z" stroke="#777" strokeDasharray="3 2" /><circle cx="10" cy="9" r="7.500" fill="#efefef" stroke="#666" strokeWidth="1.600" /><path d="M15 14 20 20" stroke="#333" strokeWidth="3.500" /></S>, 6],
  ["Display settings", <S key="d"><path d="M1 2H21V16H1Z" fill="#fff" stroke="#555" strokeWidth="1.400" /><path d="M4 4H18V14H4Z" fill="#a4b6e0" stroke="#4d5e8b" /><path d="M7 17V20H15V17" stroke="#555" strokeWidth="1.600" /></S>, 3],
  ["Grid and snaps", <S key="g"><path d="M1 1H21V21H1Z" fill="#fff" stroke="#555" strokeWidth="1.600" /><path d="M5 1V21M9 1V21M13 1V21M17 1V21M1 5H21M1 9H21M1 13H21M1 17H21" stroke="#777" /></S>, 3],
  ["Viewports", <S key="v"><path d="M1 2H21V20H1Z" fill="#fff" stroke="#4d5670" strokeWidth="1.500" /><path d="M3 4H10V10H3ZM12 4H19V10H12ZM3 12H10V18H3ZM12 12H19V18H12Z" fill="#a4b6e0" stroke="#4d5e8b" /></S>, 3],
];

export default function App() {
  return (
    <Shell>
      <GlobalStyle />
      <TitleBar>
        <AppName>
          <Svg>
            <path d="M0 0H20V20H0Z" fill="#fbe3c6" />
            <path d="M6 2H15V6H10V8H14V11H10V16H6Z" fill="#c87a1c" />
            <path d="M4 3 6 2V16L4 15Z" fill="#7a4a10" />
          </Svg>
          Autodesk Fusion 360
        </AppName>
        <Strip />
        <WindowButtons>
          <Ghost aria-label="Minimize"><Svg w={18} h={18}><path d="M3 9H16" stroke="currentColor" strokeWidth="1.200" /></Svg></Ghost>
          <Ghost aria-label="Maximize"><Svg w={18} h={18}><path d="M2 2H16V15H2Z" stroke="currentColor" strokeWidth="1.200" /></Svg></Ghost>
          <Ghost aria-label="Close"><Cross s={17} w={0.8} /></Ghost>
        </WindowButtons>
      </TitleBar>

      <TabBar>
        <QuickAccess>
          <QuickButton $w={20} $gap={24} aria-label="Data panel">
            <Svg>
              {[0, 7, 14].map((x) => [0, 7, 14].map((y) => <rect key={`${x}${y}`} x={x} y={y} width="5" height="5" fill="currentColor" />))}
            </Svg>
          </QuickButton>
          <QuickButton $w={34} $gap={26} aria-label="File"><FileIcon /><Caret /></QuickButton>
          <QuickButton $w={20} $gap={24} aria-label="Save">
            <Svg>
              <path d="M0 2Q0 0 2 0H18Q20 0 20 2V18Q20 20 18 20H2Q0 20 0 18Z" fill="currentColor" />
              <path d="M5 2H15V8H5ZM5 12H15V18H5Z" fill="#cacaca" />
              <path d="M11 2H14V7H11ZM8 14H12V20H8Z" fill="currentColor" />
            </Svg>
          </QuickButton>
          <QuickButton $w={36} $gap={16} aria-label="Undo">
            <Svg w={18}><path d="M17 19Q18 8 5 7" stroke="currentColor" strokeWidth="2.400" /><path d="M8 1 2 7 8 13" stroke="currentColor" strokeWidth="2.400" /></Svg>
            <Caret />
          </QuickButton>
          <QuickButton $w={35} $gap={0} aria-label="Redo">
            <Svg w={18}><path d="M1 19Q0 8 13 7" stroke="currentColor" strokeWidth="2.400" /><path d="M10 1 16 7 10 13" stroke="currentColor" strokeWidth="2.400" /></Svg>
            <Caret />
          </QuickButton>
        </QuickAccess>
        <HomeTab aria-label="Home">
          <Svg><path d="M10 1 20 10H18V19H12V12H8V19H2V10H0L4 6V2H6V5Z" fill="currentColor" /></Svg>
        </HomeTab>
        <DocTab>
          <DocTitle>
            <Svg w={22} h={22}>
              <path d="M1 5 11 1 21 4 20 16 11 21 1 16Z" fill="#6a6a6a" />
              <path d="M1 5 11 8V21L1 16Z" fill="#a8a8a8" />
              <path d="M11 8 21 4 20 16 11 21Z" fill="#555" />
            </Svg>
            PDE - Assign a Material v2*
          </DocTitle>
          <Ghost aria-label="Close document"><Cross s={13} w={1.6} c="#777" /></Ghost>
        </DocTab>
        <NewTab aria-label="New tab"><Svg><path d="M10 1V19M1 10H19" stroke="currentColor" strokeWidth="3" /></Svg></NewTab>
        <Utilities>
          <Ghost aria-label="Extensions">
            <S>
              <path d="M3 17A9.500 9.500 0 0 1 5 3.500" stroke="currentColor" strokeWidth="2.400" />
              <path d="M6 20A10 10 0 0 0 18 18" stroke="currentColor" strokeWidth="2.400" />
              <path d="M7 1A11 11 0 0 1 19 18L14 17 9 16 6 13 8 9 6 6Z" fill="currentColor" />
              <path d="M10 5 13 10M14 3 16 8M19 8 16 12" stroke="#cacaca" strokeWidth="1.600" />
              <path d="M6 15 2 19" stroke="#cacaca" strokeWidth="1.600" />
            </S>
          </Ghost>
          <Ghost aria-label="Job status">
            <S><circle cx="11" cy="11" r="10.200" stroke="currentColor" strokeWidth="1.400" /><circle cx="11" cy="11" r="8.300" fill="currentColor" /><path d="M11 5V12H16" stroke="#dcdcdc" strokeWidth="2" /></S>
          </Ghost>
          <Ghost aria-label="Notifications">
            <S><path d="M11 0Q12 0 12 2Q17 4 17 9V13L20 17V18H2V17L5 13V9Q5 4 10 2Q10 0 11 0ZM8 20H14Q13 22 11 22T8 20Z" fill="currentColor" /></S>
          </Ghost>
          <Ghost aria-label="Help">
            <S><circle cx="11" cy="11" r="10.700" fill="currentColor" /><path d="M7.500 8.500Q8 5 11 5T14.500 8.500Q14 10 12 11T11 14M11 15.500V18" stroke="#dcdcdc" strokeWidth="2.400" /></S>
          </Ghost>
          <Account aria-label="Account">
            <Svg w={32} h={32}>
              <circle cx="16" cy="16" r="15.500" fill="#a9b1cd" />
              <path d="M16 1Q24 1 24 9Q24 16 20 19Q20 24 28 25Q23 31 16 31.500Q9 31 4 25Q12 24 12 19Q8 16 8 9Q8 1 16 1Z" fill="#465273" />
            </Svg>
          </Account>
        </Utilities>
      </TabBar>

      <Ribbon>
        <WorkspaceButton>DESIGN <Caret s={9} /></WorkspaceButton>
        <RibbonBody>
          <TabList role="tablist">
            {["SOLID", "SURFACE", "MESH", "SHEET METAL", "PLASTIC", "UTILITIES", "MANAGE"].map((t) => (
              <Tab key={t} role="tab" $on={t === "PLASTIC"} aria-selected={t === "PLASTIC"}>{t}</Tab>
            ))}
          </TabList>
          <Groups>
            {groups.map((g) => (
              <Group key={g.name}>
                <Tools>
                  {g.tools.map((t) => (
                    <Tool key={t} aria-label={t} $on={t === "assignRule"}>{icons[t]}</Tool>
                  ))}
                </Tools>
                <GroupLabel>{g.name} <Caret s={9} /></GroupLabel>
              </Group>
            ))}
          </Groups>
        </RibbonBody>
      </Ribbon>

      <Stage>
        <ModelLayer><Model /></ModelLayer>

        <LeftDock>
          <PanelBar>
            <ArrowSlot><Doubles left /></ArrowSlot>
            <PanelTitle>BROWSER</PanelTitle>
            <Ghost aria-label="Collapse browser"><Dot /></Ghost>
            <Grip />
          </PanelBar>
          <Tree>
            <TreeRow $root>
              <Expander $root aria-label="Collapse document">
                <Svg w={17} h={17}><path d="M1 16 16 1V16Z" fill="#a5a5a5" stroke="#333" strokeWidth="1.400" /></Svg>
              </Expander>
              <TreeCell>
                <EyeButton aria-label="Toggle visibility"><Eye /></EyeButton>
                <TreeLabel $kind="root">
                  <Svg w={22} h={22}>
                    <path d="M1 5 5 1H12V10H9V21H1Z" fill="#f7f7fa" stroke="#444" strokeWidth="1.300" />
                    <path d="M1 11H9M9 13 13 9H21V17L17 21H9Z" fill="#f7f7fa" stroke="#444" strokeWidth="1.300" />
                  </Svg>
                  PDE - Assign a Material v2
                </TreeLabel>
                <Badge>J</Badge>
                <ActiveRadio type="radio" name="active" defaultChecked aria-label="Activate component" />
              </TreeCell>
            </TreeRow>
            {tree.map((n) => (
              <TreeRow key={n.name}>
                <Expander aria-label={`Expand ${n.name}`}><TreeArrow /></Expander>
                <TreeCell>
                  {n.eye && <EyeButton aria-label="Toggle visibility"><Eye off={n.eye === "off"} /></EyeButton>}
                  <TreeLabel $kind={n.icon === "cube" ? "sel" : undefined}>
                    {n.icon === "gear" ? <Gear /> : n.icon === "cube" ? <Cube /> : <Folder />}
                    {n.name}
                  </TreeLabel>
                </TreeCell>
              </TreeRow>
            ))}
          </Tree>
        </LeftDock>

        <RightDock>
          <CubeHolder><ViewCube /></CubeHolder>
          <Dialog onSubmit={(e) => e.preventDefault()}>
            <DialogHead>
              <HeadGrip />
              <Dot />
              <h2>ASSIGN PLASTIC RULE</h2>
              <Doubles />
            </DialogHead>
            <Fields>
              <FieldLabel $top={10}>Component</FieldLabel>
              <Picker>
                <Selected type="button"><Arrow w={13} h={21} fill="#e8eef5" stroke="#4a5a6c" />1 selected</Selected>
                <Ghost type="button" aria-label="Clear selection"><Cross s={13} w={2.4} c="#4a4a4a" /></Ghost>
              </Picker>
              <FieldLabel $top={13}>Plastic Rule</FieldLabel>
              <RuleBox>
                <RuleList>
                  <RuleRow $indent={34} $h={27}><IconCell><FileIcon w={17} h={21} /></IconCell>In this design</RuleRow>
                  <RuleRow $indent={8} $h={26}>
                    <Twist type="button" $w={25} aria-label="Collapse Library"><Svg w={13} h={9}><path d="M1 1 6.500 7 12 1" stroke="#444" strokeWidth="2.400" /></Svg></Twist>
                    <IconCell><Folder c="#4c4c4c" /></IconCell>Library
                  </RuleRow>
                  <RuleRow $indent={34} $h={22}>
                    <Twist type="button" $w={21} aria-label="Collapse ABS">
                      <Svg w={13} h={20}><path d="M1 5 6.500 11 12 5" stroke="#59b0e0" strokeWidth="2.400" /></Svg>
                      <Pointer><Arrow w={17} h={25} /></Pointer>
                    </Twist>
                    <RuleName $on>ABS (1.5mm) (Default)</RuleName>
                  </RuleRow>
                  <RuleTable>
                    <tbody>
                      {rule.map(([k, v]) => (
                        <tr key={k}><th scope="row">{k}</th><td>{v}</td></tr>
                      ))}
                    </tbody>
                  </RuleTable>
                  <RuleRow $indent={37} $h={22}>
                    <Twist type="button" $w={18} aria-label="Expand Nylon"><Svg w={9} h={13}><path d="M1 1 7 6.500 1 12" stroke="#999" strokeWidth="2" /></Svg></Twist>
                    <RuleName>Nylon (PA6) (2.5mm)</RuleName>
                  </RuleRow>
                </RuleList>
                <Track><Thumb /></Track>
              </RuleBox>
            </Fields>
            <DialogFoot>
              <Svg w={17} h={17}><circle cx="8.500" cy="8.500" r="8.300" fill="#111" /><path d="M7 3H10V5.500H7ZM6 7H10V12H11V13.500H6V12H7V8.500H6Z" fill="#fff" /></Svg>
              <Spring />
              <FootButton type="submit">OK</FootButton>
              <FootButton type="button">Cancel</FootButton>
            </DialogFoot>
          </Dialog>
        </RightDock>

        <StageFoot>
          <Comments>
            <ArrowSlot />
            <PanelTitle>COMMENTS</PanelTitle>
            <Ghost aria-label="Expand comments"><Dot plus /></Ghost>
            <Grip />
          </Comments>
          <NavBar>
            {nav.map(([name, icon, gap]) => (
              <NavButton key={name} aria-label={name} $gap={gap}>{icon}{gap && <Caret />}</NavButton>
            ))}
          </NavBar>
          <Status>
            MainBody:1
            <Svg><path d="M10 0Q20 0 20 10V20H10Q0 20 0 10T10 0Z" fill="#333" /><path d="M5 15 9 5H11L15 15M8 12 11 9 13 13" stroke="#fff" strokeWidth="2" /></Svg>
          </Status>
        </StageFoot>
      </Stage>

      <Timeline>
        <Playback>
          {playback.map(([name, d]) => (
            <Ghost key={name} aria-label={name}><Svg w={18} h={20}><path d={d} fill="currentColor" /></Svg></Ghost>
          ))}
        </Playback>
        <History>
          {steps.map(([name, icon], i) => (
            <Step key={i}>
              <StepButton $on={i === 0} aria-label={name}>
                {i === 0 && <Hatch><Svg w={22} h={7}><path d="M1 7 6 0M8 7 13 0M15 7 20 0" stroke="#333" strokeWidth="2.400" /></Svg></Hatch>}
                {icon}
              </StepButton>
            </Step>
          ))}
        </History>
        <Marker><Svg w={16} h={44}><path d="M0 0H16V6L9 12V43H7V12L0 6Z" fill="#5a5a5a" /></Svg></Marker>
        <Spring />
        <Ghost aria-label="Timeline settings"><Gear /></Ghost>
      </Timeline>
    </Shell>
  );
}
